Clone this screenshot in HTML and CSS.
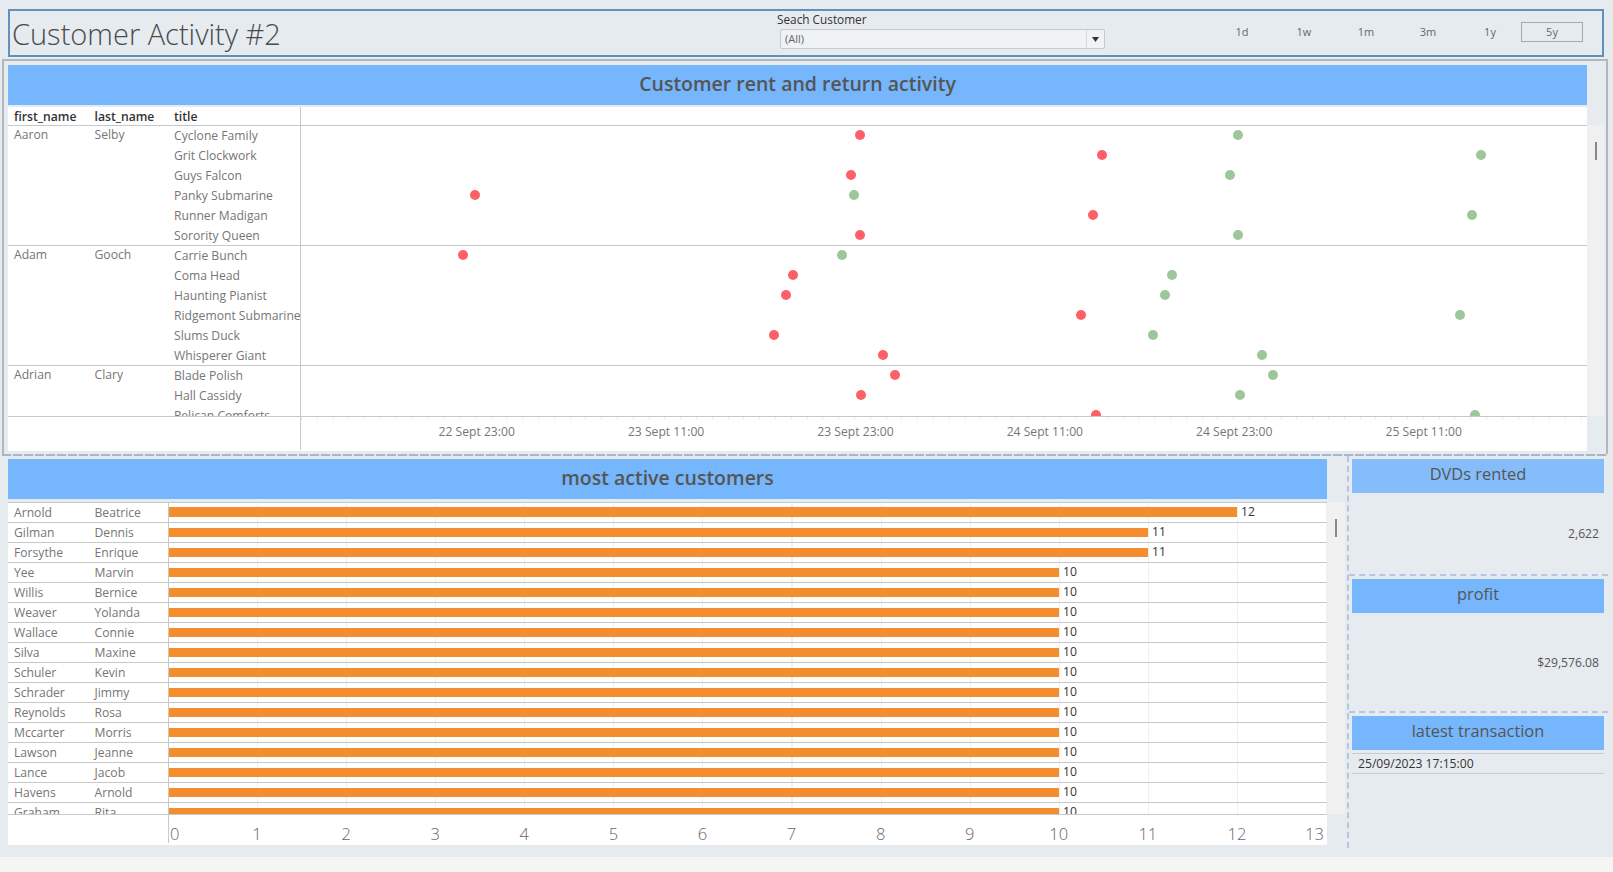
FILE: index.html
```html
<!DOCTYPE html>
<html lang="en">
<head>
<meta charset="utf-8">
<title>Customer Activity #2</title>
<link rel="stylesheet" href="styles.css">
</head>
<body>
<div class="dash">
  <header class="top">
    <h1 class="page-title">Customer Activity #2</h1>
    <div class="filter">
      <div class="filter-label">Seach Customer</div>
      <div class="select"><span class="select-value">(All)</span><span class="select-btn"><svg width="7" height="5" viewBox="0 0 7 5"><path d="M0 0h7L3.5 5z" fill="#333"/></svg></span></div>
    </div>
    <div class="ranges">
      <span class="range">1d</span><span class="range">1w</span><span class="range">1m</span><span class="range">3m</span><span class="range">1y</span><span class="range active">5y</span>
    </div>
  </header>

  <section class="main">
    <h2 class="band band-main">Customer rent and return activity</h2>
    <div class="activity">
      <div class="activity-table">
        <div class="head-row">
          <span class="c-first">first_name</span><span class="c-last">last_name</span><span class="c-title">title</span><span class="track"></span>
        </div>
        <div class="groups">
          <div class="group">
            <div class="c-first name">Aaron</div><div class="c-last name">Selby</div>
            <div class="rows">
              <div class="row"><span class="c-title">Cyclone Family</span><span class="track"><i class="dot red" style="left:560px"></i><i class="dot green" style="left:938px"></i></span></div>
              <div class="row"><span class="c-title">Grit Clockwork</span><span class="track"><i class="dot red" style="left:802px"></i><i class="dot green" style="left:1181px"></i></span></div>
              <div class="row"><span class="c-title">Guys Falcon</span><span class="track"><i class="dot red" style="left:551px"></i><i class="dot green" style="left:930px"></i></span></div>
              <div class="row"><span class="c-title">Panky Submarine</span><span class="track"><i class="dot red" style="left:175px"></i><i class="dot green" style="left:554px"></i></span></div>
              <div class="row"><span class="c-title">Runner Madigan</span><span class="track"><i class="dot red" style="left:793px"></i><i class="dot green" style="left:1172px"></i></span></div>
              <div class="row"><span class="c-title">Sorority Queen</span><span class="track"><i class="dot red" style="left:560px"></i><i class="dot green" style="left:938px"></i></span></div>
            </div>
          </div>
          <div class="group">
            <div class="c-first name">Adam</div><div class="c-last name">Gooch</div>
            <div class="rows">
              <div class="row"><span class="c-title">Carrie Bunch</span><span class="track"><i class="dot red" style="left:163px"></i><i class="dot green" style="left:542px"></i></span></div>
              <div class="row"><span class="c-title">Coma Head</span><span class="track"><i class="dot red" style="left:493px"></i><i class="dot green" style="left:872px"></i></span></div>
              <div class="row"><span class="c-title">Haunting Pianist</span><span class="track"><i class="dot red" style="left:486px"></i><i class="dot green" style="left:865px"></i></span></div>
              <div class="row"><span class="c-title">Ridgemont Submarine</span><span class="track"><i class="dot red" style="left:781px"></i><i class="dot green" style="left:1160px"></i></span></div>
              <div class="row"><span class="c-title">Slums Duck</span><span class="track"><i class="dot red" style="left:474px"></i><i class="dot green" style="left:853px"></i></span></div>
              <div class="row"><span class="c-title">Whisperer Giant</span><span class="track"><i class="dot red" style="left:583px"></i><i class="dot green" style="left:962px"></i></span></div>
            </div>
          </div>
          <div class="group">
            <div class="c-first name">Adrian</div><div class="c-last name">Clary</div>
            <div class="rows">
              <div class="row"><span class="c-title">Blade Polish</span><span class="track"><i class="dot red" style="left:595px"></i><i class="dot green" style="left:973px"></i></span></div>
              <div class="row"><span class="c-title">Hall Cassidy</span><span class="track"><i class="dot red" style="left:561px"></i><i class="dot green" style="left:940px"></i></span></div>
              <div class="row"><span class="c-title">Pelican Comforts</span><span class="track"><i class="dot red" style="left:796px"></i><i class="dot green" style="left:1175px"></i></span></div>
            </div>
          </div>
        </div>
        <div class="time-axis">
          <div class="axis-side"></div>
          <div class="time-labels">
            <span>22 Sept 23:00</span><span>23 Sept 11:00</span><span>23 Sept 23:00</span><span>24 Sept 11:00</span><span>24 Sept 23:00</span><span>25 Sept 11:00</span>
          </div>
        </div>
      </div>
      <div class="scroll scroll-main"><b class="thumb"></b></div>
    </div>
  </section>

  <section class="lower">
    <div class="left-panel">
      <h2 class="band band-main">most active customers</h2>
      <div class="bars-wrap">
        <div class="bars">
          <div class="bar-rows">
            <div class="bar-row"><span class="b-first">Arnold</span><span class="b-last">Beatrice</span><span class="bar-track"><i class="bar" style="width:92.23%"></i><em>12</em></span></div>
            <div class="bar-row"><span class="b-first">Gilman</span><span class="b-last">Dennis</span><span class="bar-track"><i class="bar" style="width:84.55%"></i><em>11</em></span></div>
            <div class="bar-row"><span class="b-first">Forsythe</span><span class="b-last">Enrique</span><span class="bar-track"><i class="bar" style="width:84.55%"></i><em>11</em></span></div>
            <div class="bar-row"><span class="b-first">Yee</span><span class="b-last">Marvin</span><span class="bar-track"><i class="bar" style="width:76.86%"></i><em>10</em></span></div>
            <div class="bar-row"><span class="b-first">Willis</span><span class="b-last">Bernice</span><span class="bar-track"><i class="bar" style="width:76.86%"></i><em>10</em></span></div>
            <div class="bar-row"><span class="b-first">Weaver</span><span class="b-last">Yolanda</span><span class="bar-track"><i class="bar" style="width:76.86%"></i><em>10</em></span></div>
            <div class="bar-row"><span class="b-first">Wallace</span><span class="b-last">Connie</span><span class="bar-track"><i class="bar" style="width:76.86%"></i><em>10</em></span></div>
            <div class="bar-row"><span class="b-first">Silva</span><span class="b-last">Maxine</span><span class="bar-track"><i class="bar" style="width:76.86%"></i><em>10</em></span></div>
            <div class="bar-row"><span class="b-first">Schuler</span><span class="b-last">Kevin</span><span class="bar-track"><i class="bar" style="width:76.86%"></i><em>10</em></span></div>
            <div class="bar-row"><span class="b-first">Schrader</span><span class="b-last">Jimmy</span><span class="bar-track"><i class="bar" style="width:76.86%"></i><em>10</em></span></div>
            <div class="bar-row"><span class="b-first">Reynolds</span><span class="b-last">Rosa</span><span class="bar-track"><i class="bar" style="width:76.86%"></i><em>10</em></span></div>
            <div class="bar-row"><span class="b-first">Mccarter</span><span class="b-last">Morris</span><span class="bar-track"><i class="bar" style="width:76.86%"></i><em>10</em></span></div>
            <div class="bar-row"><span class="b-first">Lawson</span><span class="b-last">Jeanne</span><span class="bar-track"><i class="bar" style="width:76.86%"></i><em>10</em></span></div>
            <div class="bar-row"><span class="b-first">Lance</span><span class="b-last">Jacob</span><span class="bar-track"><i class="bar" style="width:76.86%"></i><em>10</em></span></div>
            <div class="bar-row"><span class="b-first">Havens</span><span class="b-last">Arnold</span><span class="bar-track"><i class="bar" style="width:76.86%"></i><em>10</em></span></div>
            <div class="bar-row"><span class="b-first">Graham</span><span class="b-last">Rita</span><span class="bar-track"><i class="bar" style="width:76.86%"></i><em>10</em></span></div>
          </div>
          <div class="count-axis">
            <div class="count-side"></div>
            <div class="count-labels">
              <span class="first">0</span><span>1</span><span>2</span><span>3</span><span>4</span><span>5</span><span>6</span><span>7</span><span>8</span><span>9</span><span>10</span><span>11</span><span>12</span><span class="last">13</span>
            </div>
          </div>
        </div>
        <div class="scroll scroll-bars"><b class="thumb"></b></div>
      </div>
    </div>
    <aside class="right-panel">
      <div class="kpi">
        <h3 class="band band-kpi band-light">DVDs rented</h3>
        <div class="kpi-value">2,622</div>
      </div>
      <div class="kpi kpi-profit">
        <h3 class="band band-kpi">profit</h3>
        <div class="kpi-value">$29,576.08</div>
      </div>
      <div class="kpi kpi-latest">
        <h3 class="band band-kpi">latest transaction</h3>
        <div class="latest">25/09/2023 17:15:00</div>
      </div>
    </aside>
  </section>
</div>
<div class="footer"></div>
</body>
</html>
```
FILE: styles.css
```css
* { box-sizing: border-box; }
html, body { margin: 0; padding: 0; height: 100%; overflow: hidden; }
body { background: #f5f5f5; font-family: "Open Sans", "Noto Sans", sans-serif; color: #767676; font-size: 12.15px; }
h1, h2, h3 { margin: 0; font-weight: normal; }
i, em, b { font-style: normal; display: block; }

.dash { height: 857px; background: #e6ebf0; padding-top: 9px; display: flex; flex-direction: column; }

/* header */
.top { height: 48px; flex: none; margin: 0 9px 0 8px; border: 2px solid #6490bb; display: flex; position: relative; }
.page-title { font-size: 29px; font-weight: 300; color: #4a4a4a; line-height: 46px; margin-left: 2px; width: 765px; flex: none; white-space: nowrap; }
.filter { width: 344px; flex: none; }
.filter-label { font-size: 11.8px; color: #333; line-height: 14px; margin-top: 1px; }
.select { margin: 3px 0 0 3px; width: 325px; height: 20px; background: #eff3f6; border: 1px solid #c8c8c8; border-radius: 2px; display: flex; align-items: center; justify-content: space-between; }
.select-value { padding-left: 4px; font-size: 11px; line-height: 16px; color: #666; }
.select-btn { width: 18px; height: 18px; border-left: 1px solid #d8d8d8; display: flex; align-items: center; justify-content: center; }
.ranges { display: flex; margin-left: 90px; margin-top: 11px; height: 20px; }
.range { width: 62px; height: 20px; text-align: center; line-height: 20px; font-size: 11px; color: #666; }
.range.active { border: 1px solid #a9a9a9; line-height: 18px; }

/* main */
.main { position: relative; flex: none; margin: 2px 5px 0 2px; height: 397px; border: 2px solid #b3b7bb; padding: 4px 2px 3px 4px; display: flex; flex-direction: column; }
.main::after { content: ""; position: absolute; left: -2px; right: -2px; bottom: -2px; height: 2px; background: repeating-linear-gradient(90deg, #a6b5cd 0 9px, #dfe4ea 9px 11px); }
.band { background: #75b6fc; color: #555; text-align: center; font-weight: 600; }
.band-main { height: 40px; flex: none; line-height: 38px; font-size: 19.5px; }
.main .band-main { margin-right: 17px; }
.activity { display: flex; flex: none; margin-top: 2px; height: 344px; }
.activity-table { width: 1579px; background: #fff; display: flex; flex-direction: column; flex: none; }
.head-row { display: flex; flex: none; height: 19px; border-bottom: 1px solid #c8c8c8; color: #333; font-weight: 600; font-size: 12.2px; line-height: 20px; }
.c-first { width: 86.5px; padding-left: 6px; flex: none; }
.c-last { width: 79.5px; flex: none; }
.c-title { width: 126px; flex: none; white-space: nowrap; }
.groups { height: 290px; flex: none; overflow: hidden; }
.group { display: flex; height: 120px; border-bottom: 1px solid #c8c8c8; }
.name { line-height: 18px; }
.rows { flex: 1; }
.row { display: flex; height: 20px; line-height: 20px; }
.track { flex: 1; position: relative; border-left: 1px solid #c8c8c8; display: block; }
.dot { position: absolute; top: 4px; width: 10px; height: 10px; margin-left: -6px; border-radius: 50%; }
.red { background: #fd6066; }
.green { background: #9dc69a; }
.time-axis { display: flex; flex: none; height: 35px; border-top: 1px solid #c8c8c8; }
.axis-side { width: 292px; flex: none; }
.time-labels { flex: 1; border-left: 1px solid #c8c8c8; display: flex; padding-left: 81px; margin-bottom: 1px; background: repeating-linear-gradient(90deg, #eeeeee 0 1px, transparent 1px 15.8px) 0 0 / 100% 3px no-repeat; }
.time-labels span { width: 189.4px; flex: none; text-align: center; line-height: 30px; }
.scroll { background: #f0f0f0; flex: none; display: flex; justify-content: center; }
.scroll-main { width: 17px; height: 291px; margin-top: 18px; }
.thumb { width: 2px; height: 18px; background: #888; }
.scroll-main .thumb { margin-top: 17px; }

/* lower */
.lower { display: flex; flex: none; height: 392px; margin: 0 5px 0 8px; }
.left-panel { width: 1337px; flex: none; padding-top: 3px; }
.left-panel .band-main { width: 1319px; }
.bars-wrap { display: flex; margin-top: 3px; }
.bars { width: 1319px; background: #fff; flex: none; height: 343px; display: flex; flex-direction: column; }
.bar-rows { height: 312px; flex: none; overflow: hidden; border-top: 1px solid #c8c8c8; }
.bar-row { display: flex; height: 20px; border-bottom: 1px solid #c8c8c8; line-height: 19px; }
.b-first { width: 86.5px; padding-left: 6px; flex: none; }
.b-last { width: 73.5px; flex: none; }
.bar-track { flex: 1; display: flex; align-items: flex-start; border-left: 1px solid #c8c8c8; background: repeating-linear-gradient(90deg, transparent 0 88px, #f0f0f0 88px 89.08px); height: 19px; }
.bar { height: 9px; margin-top: 5px; background: #f48d2e; }
.bar-row:first-child .bar { height: 10px; margin-top: 4px; }
.bar-track em { margin-left: 4px; color: #333; line-height: 18px; }
.count-axis { flex: 1; display: flex; border-top: 1px solid #c8c8c8; }
.count-side { width: 160px; flex: none; }
.count-labels { flex: 1; display: flex; border-left: 1px solid #c8c8c8; font-size: 16.5px; font-weight: 300; color: #666; line-height: 38px; height: 28px; }
.count-labels span { width: 89.08px; text-align: center; flex: none; }
.count-labels .first { width: 43.5px; text-align: left; padding-left: 1px; }
.count-labels .last { width: 44.5px; text-align: right; padding-right: 2px; }
.scroll-bars { width: 18px; height: 312px; }
.scroll-bars .thumb { margin-top: 17px; }

.right-panel { flex: 1; border-left: 2px dashed #b5c6dd; margin-left: 2px; display: flex; flex-direction: column; }
.kpi { height: 120px; flex: none; padding: 3px 4px 0 3px; border-bottom: 2px dashed #b5c6dd; }
.kpi-profit { height: 137px; }
.kpi-latest { border-bottom: 0; flex: 1; }
.band-kpi { height: 34px; line-height: 30px; font-size: 16.4px; font-weight: 400; }
.band-light { background: #85bcfa; }
.kpi-value { text-align: right; padding: 26px 1px 0 0; color: #555; line-height: 30px; margin-right: 4px; }
.kpi-profit .kpi-value { padding-top: 35px; }
.latest { margin-top: 3px; height: 21px; border-top: 1px solid #c8ccd0; border-bottom: 1px solid #c8ccd0; padding-left: 6px; line-height: 19px; color: #333; }

.footer { height: 15px; background: #f5f5f5; }
```
